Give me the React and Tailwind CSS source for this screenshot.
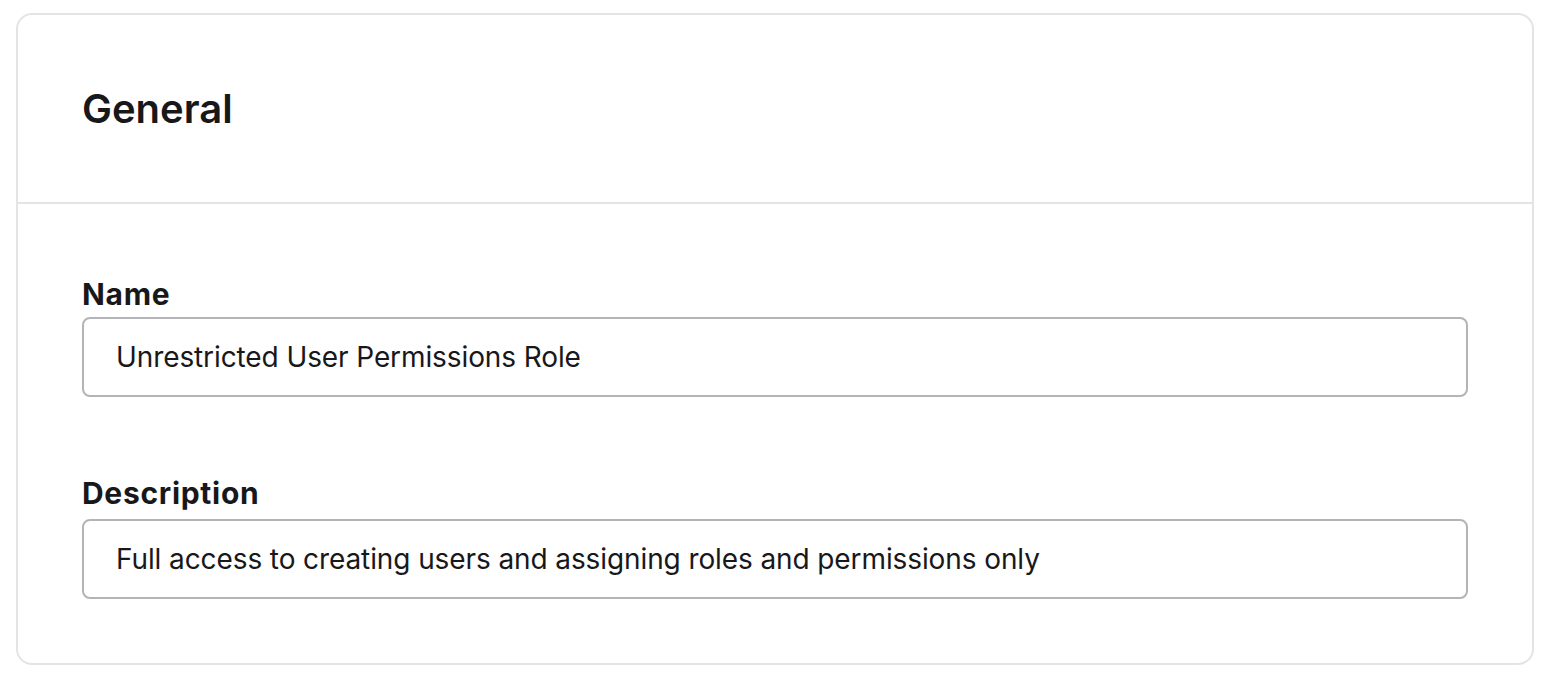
import React, { useState } from "react";

const App = () => {
  const [name, setName] = useState("Unrestricted User Permissions Role");
  const [description, setDescription] = useState(
    "Full access to creating users and assigning roles and permissions only"
  );

  return (
    <div
      className="min-h-screen bg-white pt-[13px] pl-[16px] pr-[12px]"
      style={{ fontFamily: "Inter, 'Noto Sans', sans-serif" }}
    >
      <div className="w-[1518px] rounded-[16px] border-2 border-[#e4e4e7] bg-white">
        <div className="flex h-[187px] items-center px-[64px]">
          <h2 className="text-[40px] font-semibold leading-[48px] text-[#18181b]">General</h2>
        </div>
        <div className="h-[2px] bg-[#e4e4e7]" />
        <div className="px-[64px] pt-[70px] pb-[64px]">
          <label className="block text-[30px] font-bold leading-[40px] tracking-[0.7px] text-[#18181b]">
            Name
          </label>
          <input
            type="text"
            value={name}
            onChange={(e) => setName(e.target.value)}
            className="mt-[3px] block h-[80px] w-full rounded-[8px] border-2 border-[#b4b4b8] px-[32px] text-[28px] tracking-[-0.1px] text-[#18181b] outline-none"
          />
          <label className="mt-[76px] block text-[30px] font-bold leading-[40px] tracking-[0.7px] text-[#18181b]">
            Description
          </label>
          <input
            type="text"
            value={description}
            onChange={(e) => setDescription(e.target.value)}
            className="mt-[6px] block h-[80px] w-full rounded-[8px] border-2 border-[#b4b4b8] px-[32px] text-[28px] tracking-[-0.1px] text-[#18181b] outline-none"
          />
        </div>
      </div>
    </div>
  );
};

export default App;
